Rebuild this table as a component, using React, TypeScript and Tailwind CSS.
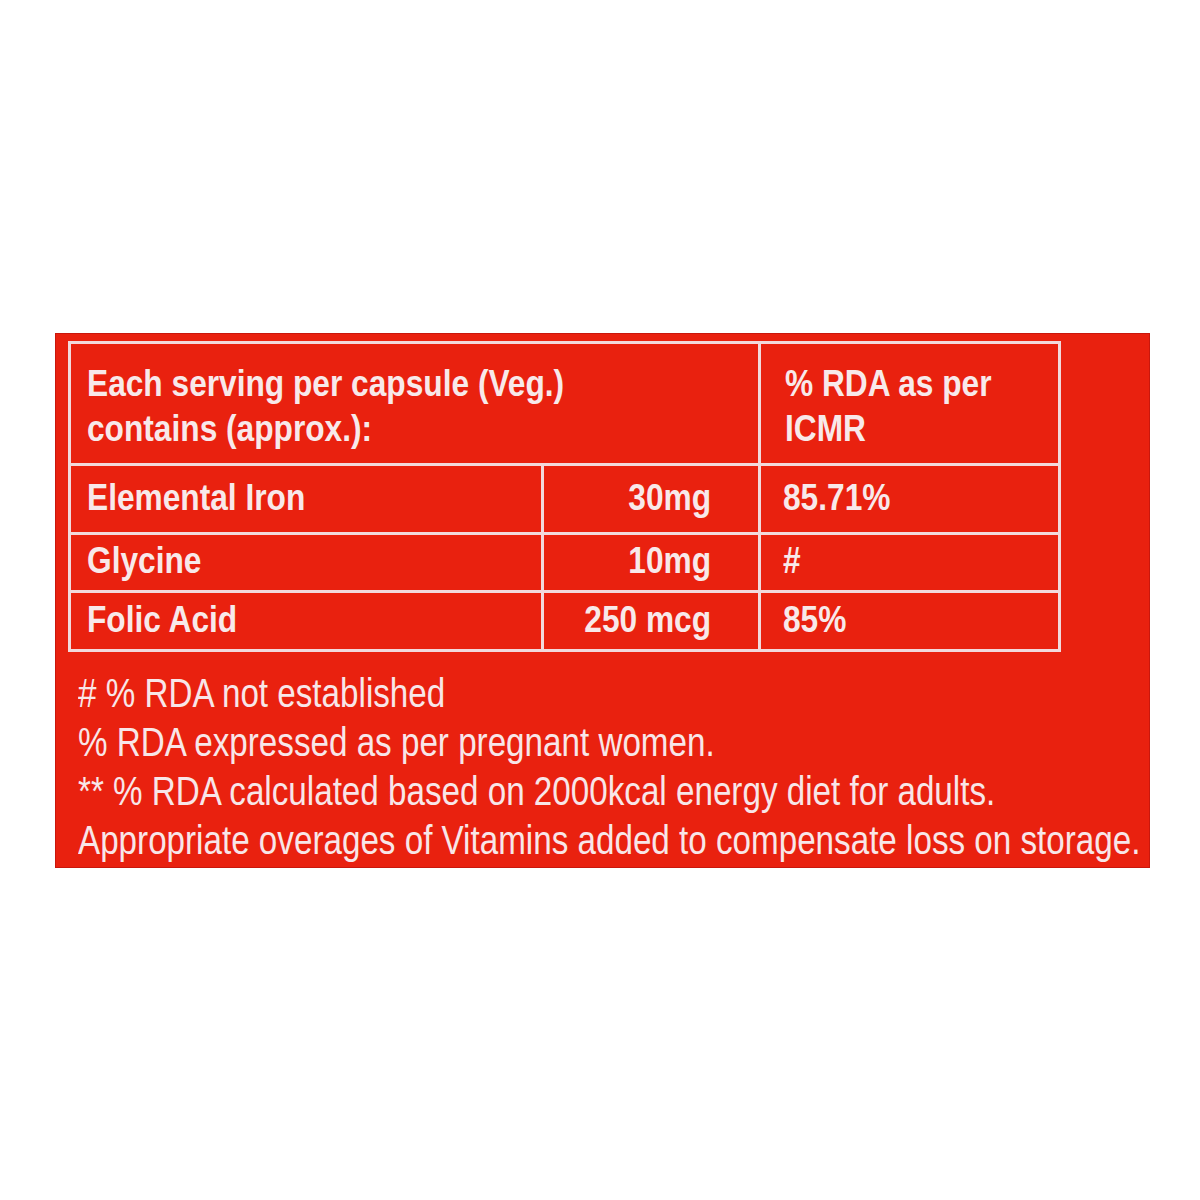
const rows = [
  { name: "Elemental Iron", amount: "30mg", rda: "85.71%", h: "h-[66px]" },
  { name: "Glycine", amount: "10mg", rda: "#", h: "h-[55px]" },
  { name: "Folic Acid", amount: "250 mcg", rda: "85%", h: "h-[56px]" },
];

const notes = [
  "# % RDA not established",
  "% RDA expressed as per pregnant women.",
  "** % RDA calculated based on 2000kcal energy diet for adults.",
  "Appropriate overages of Vitamins added to compensate loss on storage.",
];

// condensed look: Arial-width face squeezed horizontally
const squeeze = "inline-block whitespace-nowrap scale-x-[0.88]";

export default function App() {
  return (
    <div className="w-[1200px] h-[1200px] bg-white pt-[333px] pl-[55px] font-['Liberation_Sans',Arial,sans-serif]">
      <div className="w-[1095px] h-[535px] bg-[#e9210f] border border-[#c9170c] pt-[7px] pl-[12px]">
        {/* ingredient table */}
        <div className="w-[993px] grid grid-cols-[470px_214px_297px] gap-[3px] p-[3px] bg-[#f2d9dc] text-[#f8e9ea] font-bold text-[36px] leading-[45px]">
          <div className="col-span-2 h-[119px] bg-[#e9210f] pt-[17px] pl-[16px]">
            <span className={`${squeeze} origin-left`}>
              Each serving per capsule (Veg.)
              <br />
              contains (approx.):
            </span>
          </div>
          <div className="h-[119px] bg-[#e9210f] pt-[17px] pl-[24px]">
            <span className={`${squeeze} origin-left`}>
              % RDA as per
              <br />
              ICMR
            </span>
          </div>
          {rows.map((r) => (
            <div key={r.name} className="contents">
              <div className={`${r.h} bg-[#e9210f] flex items-center pl-[16px] pb-[4px]`}>
                <span className={`${squeeze} origin-left`}>{r.name}</span>
              </div>
              <div className={`${r.h} bg-[#e9210f] flex items-center justify-end pr-[47px] pb-[4px]`}>
                <span className={`${squeeze} origin-right`}>{r.amount}</span>
              </div>
              <div className={`${r.h} bg-[#e9210f] flex items-center pl-[22px] pb-[4px]`}>
                <span className={`${squeeze} origin-left`}>{r.rda}</span>
              </div>
            </div>
          ))}
        </div>

        {/* footnotes */}
        <div className="mt-[17px] pl-[10px] text-[#f8e6e8] text-[40px] leading-[49px]">
          {notes.map((n) => (
            <div key={n} className="whitespace-nowrap origin-left scale-x-[0.83]">
              {n}
            </div>
          ))}
        </div>
      </div>
    </div>
  );
}
